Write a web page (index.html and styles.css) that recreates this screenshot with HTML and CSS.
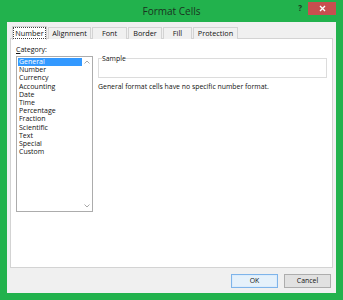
FILE: index.html
```html
<!DOCTYPE html>
<html>
<head>
<meta charset="utf-8">
<link rel="stylesheet" href="styles.css">
</head>
<body>
<div class="frame">
  <div class="titlebar">
    <div></div>
    <div class="title">Format Cells</div>
    <div class="controls">
      <span class="help">?</span>
      <span class="close"><svg width="7" height="7" viewBox="0 0 7 7"><path d="M1 1L6 6M6 1L1 6" stroke="#fff" stroke-width="1.4"/></svg></span>
    </div>
  </div>
  <div class="window">
    <div class="tabs">
      <div class="tab active"><span class="focus">Number</span></div>
      <div class="tab">Alignment</div>
      <div class="tab">Font</div>
      <div class="tab">Border</div>
      <div class="tab">Fill</div>
      <div class="tab">Protection</div>
    </div>
    <div class="panel">
      <div class="left">
        <div class="label"><u>C</u>ategory:</div>
        <div class="listbox">
          <ul class="items">
            <li class="sel">General</li>
            <li>Number</li>
            <li>Currency</li>
            <li>Accounting</li>
            <li>Date</li>
            <li>Time</li>
            <li>Percentage</li>
            <li>Fraction</li>
            <li>Scientific</li>
            <li>Text</li>
            <li>Special</li>
            <li>Custom</li>
          </ul>
          <div class="scrollbar">
            <svg width="6" height="4" viewBox="0 0 6 4"><path d="M0.5 3.5L3 1L5.5 3.5" fill="none" stroke="#a8a8a8" stroke-width="1"/></svg>
            <svg width="6" height="4" viewBox="0 0 6 4"><path d="M0.5 0.5L3 3L5.5 0.5" fill="none" stroke="#a8a8a8" stroke-width="1"/></svg>
          </div>
        </div>
      </div>
      <div class="right">
        <fieldset class="sample">
          <legend>Sample</legend>
        </fieldset>
        <p class="desc">General format cells have no specific number format.</p>
      </div>
    </div>
    <div class="buttons">
      <button class="btn default">OK</button>
      <button class="btn">Cancel</button>
    </div>
  </div>
</div>
</body>
</html>
```
FILE: styles.css
```css
html, body {
  margin: 0;
  padding: 0;
}
body {
  font-family: "Open Sans", "Noto Sans", sans-serif;
  color: #111;
}
.frame {
  width: 343px;
  height: 300px;
  background: #22b24d;
  box-sizing: border-box;
  padding: 0 7px 7px 7px;
  display: flex;
  flex-direction: column;
}
.titlebar {
  height: 22px;
  flex: none;
  display: grid;
  grid-template-columns: 1fr auto 1fr;
  align-items: start;
}
.title {
  font-size: 10px;
  line-height: 23px;
  color: #1a3320;
}
.controls {
  display: flex;
  justify-content: flex-end;
  align-items: flex-start;
  padding-top: 2px;
}
.help {
  font-size: 8px;
  font-weight: bold;
  color: #1d3d22;
  line-height: 12px;
  margin-right: 6px;
}
.close {
  width: 28px;
  height: 13px;
  background: #c84f4f;
  display: flex;
  align-items: center;
  justify-content: center;
}
.window {
  flex: 1;
  background: #f0f0f0;
  padding: 4px 3px 0 3px;
  display: flex;
  flex-direction: column;
}
.tabs {
  display: grid;
  grid-template-columns: 35px 43px 35px 34px 29px 45px;
  column-gap: 1px;
  margin-left: 2px;
  height: 12px;
  position: relative;
  z-index: 1;
}
.tab {
  border: 1px solid #d3d3d3;
  border-bottom: none;
  background: #f0f0f0;
  font-size: 7.3px;
  line-height: 11px;
  text-align: center;
  color: #111;
  margin-top: 1px;
}
.tab.active {
  background: #fff;
  margin-top: 0;
  margin-bottom: -1px;
  line-height: 12px;
}
.focus {
  outline: 1px dotted #444;
  outline-offset: 0;
  padding: 0 1px;
}
.panel {
  height: 230px;
  box-sizing: border-box;
  background: #fff;
  border: 1px solid #d3d3d3;
  display: grid;
  grid-template-columns: 77px 1fr;
  column-gap: 5px;
  padding: 6px 5px 0 5px;
}
.label {
  font-size: 7px;
  line-height: 10px;
  height: 11px;
  color: #111;
}
.listbox {
  height: 156px;
  box-sizing: border-box;
  border: 1px solid #acacac;
  display: flex;
  background: #fff;
}
.items {
  list-style: none;
  margin: 0;
  padding: 1px 0 0 1px;
  flex: 1;
}
.items li {
  font-size: 7px;
  line-height: 8.2px;
  height: 8.2px;
  padding-left: 1px;
  color: #111;
  white-space: nowrap;
}
.items li.sel {
  background: #3399ff;
  color: #fff;
}
.scrollbar {
  width: 10px;
  display: flex;
  flex-direction: column;
  justify-content: space-between;
  align-items: center;
  padding: 3px 0 3px 0;
}
.right {
  padding-top: 10px;
}
.sample {
  margin: 0;
  padding: 0;
  height: 23px;
  box-sizing: border-box;
  border: 1px solid #dcdcdc;
  min-width: 0;
}
.sample legend {
  font-size: 6.9px;
  line-height: 7px;
  padding: 0;
  margin-left: 3px;
  color: #111;
}
.desc {
  margin: 4px 0 0 0;
  font-size: 6.9px;
  line-height: 9px;
  color: #111;
}
.buttons {
  display: flex;
  justify-content: flex-end;
  gap: 6px;
  padding: 6px 2px 0 0;
}
.btn {
  width: 47px;
  height: 14px;
  padding: 0;
  font-family: "Open Sans", "Noto Sans", sans-serif;
  font-size: 6.9px;
  line-height: 12px;
  background: #e1e1e1;
  border: 1px solid #adadad;
  color: #111;
}
.btn.default {
  border-color: #7eb4ea;
  background: #e5f1fb;
  box-shadow: inset 0 0 0 1px #dcecfc;
}
```
